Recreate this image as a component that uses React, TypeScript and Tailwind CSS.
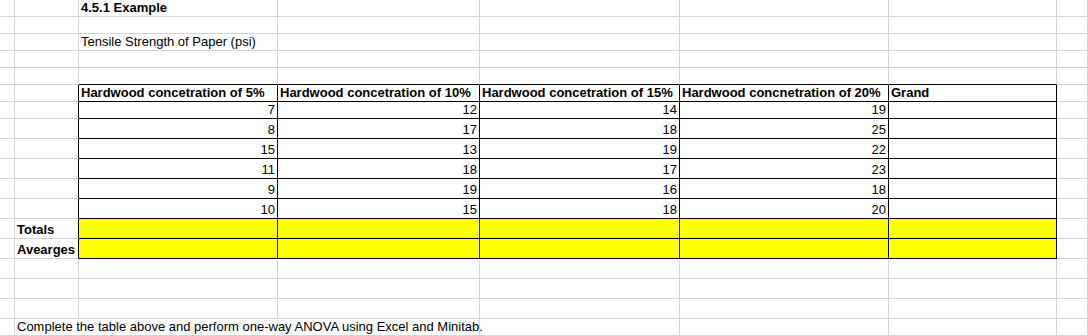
import React from "react";

type Cell = {
  text?: string;
  bold?: boolean;
  right?: boolean;
  yellow?: boolean;
  br?: boolean;
  bb?: boolean;
  span?: number;
};

const headers = [
  "Hardwood concetration of 5%",
  "Hardwood concetration of 10%",
  "Hardwood concetration of 15%",
  "Hardwood concnetration of 20%",
];

const data = [
  [7, 12, 14, 19],
  [8, 17, 18, 25],
  [15, 13, 19, 22],
  [11, 18, 17, 23],
  [9, 19, 16, 18],
  [10, 15, 18, 20],
];

const blank = (): Cell[] => Array.from({ length: 8 }, () => ({}));

const rows: { h: string; cells: Cell[] }[] = [];

// title + spacer rows
const r1 = blank();
r1[2] = { text: "4.5.1 Example", bold: true };
rows.push({ h: "h-[17px]", cells: r1 });
rows.push({ h: "h-[17px]", cells: blank() });
const r3 = blank();
r3[2] = { text: "Tensile Strength of Paper (psi)" };
rows.push({ h: "h-[17px]", cells: r3 });
rows.push({ h: "h-[17px]", cells: blank() });
const r5 = blank();
for (let i = 2; i <= 6; i++) r5[i] = { bb: true };
rows.push({ h: "h-[17px]", cells: r5 });

// header
rows.push({
  h: "h-[17px]",
  cells: [
    {},
    { br: true },
    ...headers.map((t) => ({ text: t, bold: true, br: true, bb: true })),
    { text: "Grand", bold: true, br: true, bb: true },
    {},
  ],
});

data.forEach((d, i) => {
  rows.push({
    h: i === 0 ? "h-[17px]" : "h-[20px]",
    cells: [
      {},
      { br: true },
      ...d.map((n) => ({ text: String(n), right: true, br: true, bb: true })),
      { br: true, bb: true },
      {},
    ],
  });
});

["Totals", "Avearges"].forEach((label) => {
  rows.push({
    h: "h-[20px]",
    cells: [
      {},
      { text: label, bold: true, br: true },
      ...[0, 1, 2, 3, 4].map(() => ({ yellow: true, br: true, bb: true })),
      {},
    ],
  });
});

for (let i = 0; i < 3; i++) rows.push({ h: "h-[20px]", cells: blank() });

rows.push({
  h: "h-[17px]",
  cells: [
    {},
    { text: "Complete the table above and perform one-way ANOVA using Excel and Minitab.", span: 3 },
    {},
    {},
    {},
    {},
  ],
});

export default function App() {
  return (
    <div className="w-[1088px] h-[336px] overflow-hidden bg-white font-['Liberation_Sans',Arial,sans-serif] text-[13px] text-black">
      <div className="grid grid-cols-[15px_64px_199px_202px_200px_209px_168px_1fr]">
        {rows.map((row, ri) =>
          row.cells.map((c, ci) => (
            <div
              key={`${ri}-${ci}`}
              className={[
                row.h,
                "flex items-end pb-px leading-[15px] whitespace-nowrap border-r border-b",
                c.span === 3 ? "col-span-3 overflow-visible" : "overflow-hidden",
                c.br ? "border-r-black" : "border-r-[#d4d4d4]",
                c.bb ? "border-b-black" : "border-b-[#d4d4d4]",
                c.yellow ? "bg-[#ffff00]" : "",
                c.right ? "justify-end pr-[2px]" : "pl-[2px]",
                c.bold ? "font-bold" : "",
              ].join(" ")}
            >
              {c.text}
            </div>
          ))
        )}
      </div>
    </div>
  );
}
